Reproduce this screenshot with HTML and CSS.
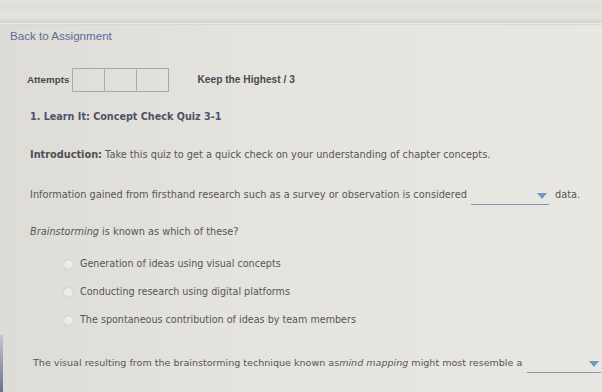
FILE: index.html
```html
<!DOCTYPE html>
<html>
<head>
<meta charset="utf-8">
<link rel="stylesheet" href="styles.css">
</head>
<body>
<div class="edge"></div>
<div class="topbar"></div>
<div class="back">Back to Assignment</div>
<div class="attempts">
  <span class="att-label">Attempts</span>
  <div class="boxes"><span class="box"></span><span class="box"></span><span class="box"></span></div>
  <span class="keep">Keep the Highest / 3</span>
</div>
<div class="quiz">
  <div class="title">1. Learn It: Concept Check Quiz 3-1</div>
  <div class="intro"><b>Introduction:</b> Take this quiz to get a quick check on your understanding of chapter concepts.</div>
  <div class="info">Information gained from firsthand research such as a survey or observation is considered <span class="dd"><span class="arrow"></span></span> data.</div>
  <div class="brain"><i>Brainstorming</i> is known as which of these?</div>
  <div class="options">
    <div class="opt"><span class="radio"></span>Generation of ideas using visual concepts</div>
    <div class="opt"><span class="radio"></span>Conducting research using digital platforms</div>
    <div class="opt"><span class="radio"></span>The spontaneous contribution of ideas by team members</div>
  </div>
  <div class="last">The visual resulting from the brainstorming technique known as<i>mind mapping</i> might most resemble a <span class="dd dd2"><span class="arrow"></span></span></div>
</div>
</body>
</html>
```
FILE: styles.css
```css
html, body {
  margin: 0;
  padding: 0;
}
body {
  width: 602px;
  height: 392px;
  overflow: hidden;
  position: relative;
  background: linear-gradient(90deg, #dedcd6 0%, #e4e3de 40%, #e8e7e2 100%);
  color: #565656;
  font-family: "DejaVu Sans", Verdana, sans-serif;
}
.edge {
  position: absolute;
  left: 0;
  top: 335px;
  width: 3px;
  height: 57px;
  background: linear-gradient(180deg, #c4c6d0, #6c7290);
}
.topbar {
  height: 22px;
  border-bottom: 1px solid #d6d5d0;
  box-shadow: 0 1px 0 #e9e8e4, 0 2px 0 #d9d8d3;
  background: linear-gradient(180deg, #e2e1dc 0, #e2e1dc 7px, #d8d7d2 8px, #e3e2dd 9px, #e3e2dd 19px, #d9d8d3 20px);
}
.back {
  margin: 6px 0 0 10px;
  font: 11.6px/14px "Liberation Sans", Arial, sans-serif;
  color: #5d6c9a;
}
.attempts {
  margin: 25px 0 0 27px;
  display: flex;
  align-items: center;
  height: 24px;
  font: bold 9.8px/12px "Liberation Sans", Arial, sans-serif;
  color: #4a4a50;
}
.boxes {
  display: flex;
  margin-left: 3px;
  border: 1px solid #a9a9a9;
  height: 22px;
}
.box {
  width: 31px;
  height: 22px;
  border-right: 1px solid #a9a9a9;
}
.box:last-child {
  width: 31px;
  border-right: none;
}
.keep {
  margin-left: 28px;
  font-size: 10.2px;
}
.quiz {
  padding-left: 30px;
  font-size: 9.75px;
  line-height: 14px;
}
.title {
  margin-top: 18px;
  font-weight: bold;
  font-size: 9.65px;
  color: #4d5269;
}
.intro {
  margin-top: 24px;
}
.intro b {
  color: #4f4f55;
}
.info {
  margin-top: 26px;
}
.dd {
  display: inline-block;
  position: relative;
  vertical-align: -7px;
  width: 78px;
  height: 14px;
  border-bottom: 1px solid #7f97b5;
  margin: 0 3px 0 1px;
}
.arrow {
  position: absolute;
  right: 2px;
  top: 3px;
  width: 0;
  height: 0;
  border-left: 5px solid transparent;
  border-right: 5px solid transparent;
  border-top: 6px solid #6d9ac4;
}
.brain {
  margin-top: 20px;
}
.options {
  margin-top: 18px;
  padding-left: 33px;
  display: flex;
  flex-direction: column;
  gap: 14px;
  font-size: 9.6px;
}
.opt {
  display: flex;
  align-items: center;
}
.radio {
  width: 9px;
  height: 9px;
  border-radius: 50%;
  border: 1px solid #cfcfcc;
  background: #ecebe7;
  margin-right: 6px;
}
.last {
  margin-top: 29px;
  margin-left: 3px;
  white-space: nowrap;
  font-size: 9.55px;
}
.dd2 {
  width: 74px;
  margin-left: 2px;
}
```
